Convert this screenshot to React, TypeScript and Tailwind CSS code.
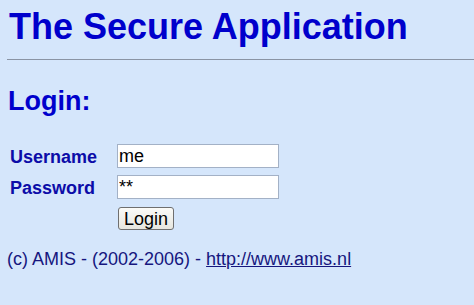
export default function App() {
  return (
    <div className="h-[305px] w-full overflow-hidden bg-[#d5e6fb] pl-[7px] font-['Liberation_Sans',Arial,sans-serif]">
      <h1 className="pl-[2px] pt-[7px] text-[36px] font-bold leading-[40px] text-[#0000cc]">
        The Secure Application
      </h1>
      <div className="mt-[12px] border-t border-[#8a94a4]" />
      <h2 className="mt-[26px] pl-[1px] text-[27px] font-bold leading-[31px] text-[#0000cc]">
        Login:
      </h2>

      {/* login table */}
      <div className="mt-[27px] grid grid-cols-[110px_auto] items-center justify-start">
        <label className="pl-[3px] pt-[1px] text-[18px] font-bold leading-[22px] text-[#0c0ca8]">
          Username
        </label>
        <input
          readOnly
          defaultValue="me"
          className="h-[24px] w-[162px] border border-[#a3b1c6] bg-white px-[1px] text-[18px] leading-[22px] text-black outline-none"
        />
        <label className="mt-[7px] pl-[3px] pt-[1px] text-[18px] font-bold leading-[22px] text-[#0c0ca8]">
          Password
        </label>
        <input
          readOnly
          defaultValue="**"
          className="mt-[7px] h-[24px] w-[162px] border border-[#a3b1c6] bg-white px-[1px] text-[18px] leading-[22px] text-black outline-none"
        />
        <div />
        <button className="ml-[1px] mt-[8px] h-[23px] w-[56px] rounded-[3px] border border-[#6f6f6f] bg-gradient-to-b from-[#fbfbf8] to-[#e6e6df] text-[18px] leading-[20px] text-black">
          Login
        </button>
      </div>

      <p className="mt-[18px] text-[18px] leading-[22px] text-[#16167e]">
        (c) AMIS - (2002-2006) -{" "}
        <a href="#" className="text-[#16167e] underline">
          http://www.amis.nl
        </a>
      </p>
    </div>
  );
}
